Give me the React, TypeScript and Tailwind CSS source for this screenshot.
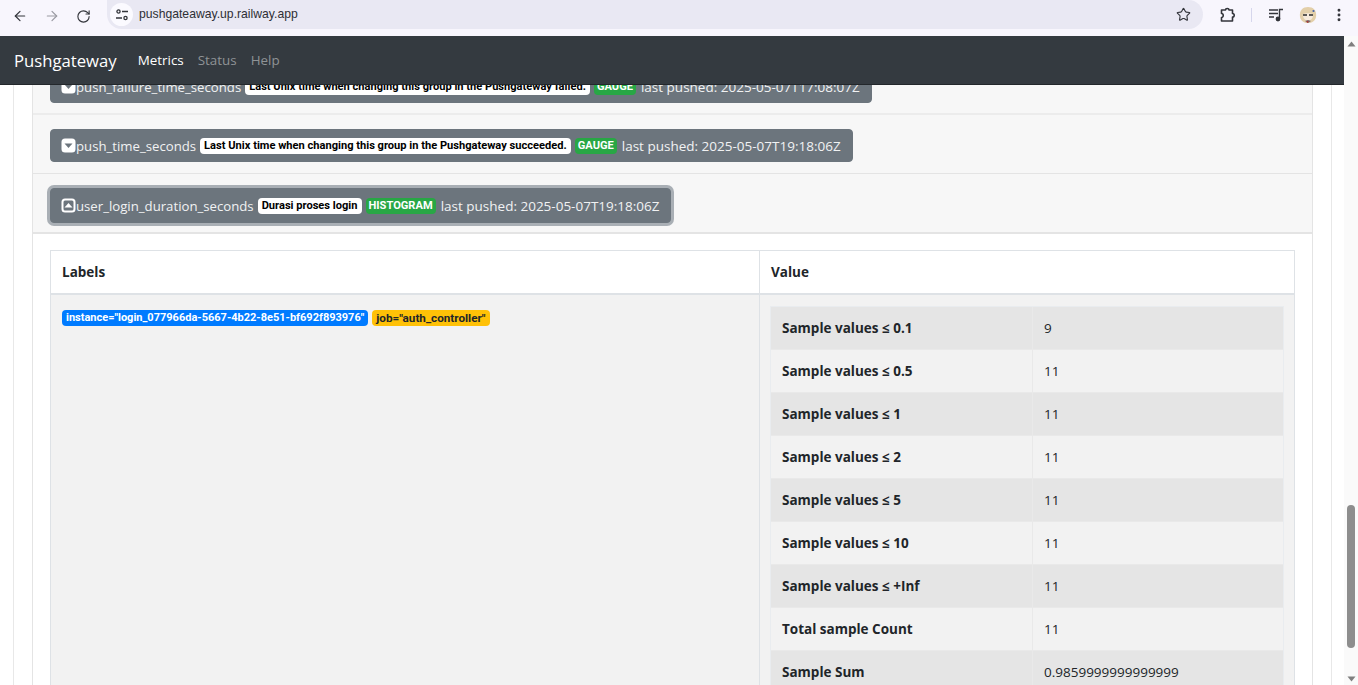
import { ArrowLeft, ArrowRight, RotateCw, Star, EllipsisVertical } from 'lucide-react';

const sampleRows = [
  ['Sample values ≤ 0.1', '9'],
  ['Sample values ≤ 0.5', '11'],
  ['Sample values ≤ 1', '11'],
  ['Sample values ≤ 2', '11'],
  ['Sample values ≤ 5', '11'],
  ['Sample values ≤ 10', '11'],
  ['Sample values ≤ +Inf', '11'],
  ['Total sample Count', '11'],
  ['Sample Sum', '0.9859999999999999'],
];

const CaretBox = ({ up }: { up?: boolean }) => (
  <svg width="15" height="15" viewBox="0 0 15 15" className="shrink-0">
    <rect x="0.5" y="0.5" width="14" height="14" rx="3.5" fill="#ffffff" />
    <rect x="2.5" y="2.5" width="10" height="10" rx="1.5" fill={up ? '#6c757d' : '#ffffff'} />
    <path d={up ? 'M3.5 9.5 L7.5 5 L11.5 9.5 Z' : 'M3.5 5.5 L11.5 5.5 L7.5 10 Z'} fill={up ? '#ffffff' : '#6c757d'} />
  </svg>
);

const MetricButton = ({ name, help, type, pushed, open }: { name: string; help: string; type: string; pushed: string; open?: boolean }) => (
  <div className={`inline-flex items-center rounded-[4px] border border-[#6c757d] bg-[#6c757d] pr-[11px] pl-[10px] text-[#f1f2f3] ${open ? 'h-[35px] shadow-[0_0_0_3px_#a9afb5]' : 'h-[33px]'}`}>
    <CaretBox up={open} />
    <span className="pt-[2px] text-[13.2px]">{name}</span>
    <span className="ml-[4px] rounded-[4px] bg-white px-[4px] py-[2px] font-['Roboto',sans-serif] text-[11.1px] font-bold leading-[12px] text-black">{help}</span>
    <span className="ml-[4px] rounded-[4px] bg-[#28a745] px-[3px] py-[2px] font-['Roboto',sans-serif] text-[11.1px] font-bold leading-[12px] text-white">{type}</span>
    <span className="ml-[5px] pt-[2px] text-[13.5px]">last pushed: {pushed}</span>
  </div>
);

const App = () => {
  return (
    <div className="flex h-[685px] w-[1358px] flex-col overflow-hidden bg-white font-['Open_Sans','Liberation_Sans',sans-serif] text-[#212529]">
      <div className="flex h-[36px] shrink-0 items-start bg-[#f8f6fd]">
        <div className="flex w-[107px] items-center pt-[8px] pl-[12px] text-[#33353b]">
          <ArrowLeft size={16} strokeWidth={1.8} />
          <ArrowRight size={16} strokeWidth={1.8} className="ml-[16px] text-[#9a9aa2]" />
          <RotateCw size={15} strokeWidth={1.8} className="ml-[16px]" />
        </div>
        <div className="flex h-[29px] w-[1096px] items-center justify-between rounded-r-[15px] rounded-bl-[15px] bg-[#e9e8f3] pr-[12px] pl-[3px]">
          <div className="flex items-center">
            <span className="flex h-[23px] w-[23px] items-center justify-center rounded-full bg-[#fbfaff]">
              <svg width="14" height="14" viewBox="0 0 14 14" fill="none" stroke="#33353b" strokeWidth="1.3">
                <circle cx="3.5" cy="3.5" r="1.6" />
                <path d="M7 3.5H13M1 10H7" />
                <circle cx="10.5" cy="10" r="1.6" />
              </svg>
            </span>
            <span className="ml-[6px] font-['Liberation_Sans',sans-serif] text-[12.2px] text-[#2e2f35]">pushgateaway.up.railway.app</span>
          </div>
          <Star size={15} strokeWidth={1.8} className="text-[#33353b]" />
        </div>
        <div className="flex flex-1 items-center pt-[6px] pl-[17px] text-[#33353b]">
          <svg width="16" height="16" viewBox="0 0 16 16" fill="none" stroke="#33353b" strokeWidth="1.6" strokeLinejoin="round">
            <path d="M1.5 3H5.5C5.5 1 9 1 9 3H12.5V6.5C14.8 6.5 14.8 10 12.5 10V14H1.5V10.5C3.8 10.5 3.8 6.5 1.5 6.5Z" />
          </svg>
          <span className="ml-[15px] h-[14px] w-px bg-[#d6d6ec]" />
          <svg width="16" height="16" viewBox="0 0 16 16" className="ml-[16px]" fill="none" stroke="#33353b" strokeWidth="1.4">
            <path d="M1 3H10M1 6.5H10M1 10H6" />
            <path d="M11.5 12V2.5H15" />
            <circle cx="10" cy="12" r="1.7" fill="#33353b" />
          </svg>
          <svg width="18" height="18" viewBox="0 0 18 18" className="ml-[15px]">
            <path d="M1 11C0 4 4 1 9 1C14 1 18 4 17 11C16 15 13 17 9 17C5 17 2 15 1 11Z" fill="#e3cfa9" />
            <path d="M4 8C6 7 12 7 14 8C14.5 12 12 14.5 9 14.5C6 14.5 3.5 12 4 8Z" fill="#f6eadc" />
            <path d="M4 9H8M10 9H14" stroke="#2a2a2a" strokeWidth="1.4" />
            <path d="M6 15L9 14L12 15L9 17Z" fill="#7a6a70" />
            <circle cx="8.5" cy="15.8" r="0.9" fill="#b5332e" />
            <circle cx="14.5" cy="5" r="1.1" fill="#4565a8" />
          </svg>
          <EllipsisVertical size={16} strokeWidth={2.4} className="ml-[14px]" />
        </div>
      </div>

      <div className="flex min-h-0 flex-1">
        <div className="relative min-w-0 flex-1 overflow-hidden">
          <nav className="absolute inset-x-0 top-0 z-10 flex h-[49px] items-center border-b border-[#23272b] bg-[#343a40] pl-[14px]">
            <span className="pt-[2px] text-[16.7px] text-white">Pushgateway</span>
            <span className="ml-[21px] text-[13.4px] text-white">Metrics</span>
            <span className="ml-[14px] text-[13.4px] text-[#8f9396]">Status</span>
            <span className="ml-[14px] text-[13.4px] text-[#8f9396]">Help</span>
          </nav>

          <div className="ml-[13px] w-[1319px] border-x border-[#e8e8e8] pr-[18px] pl-[18px]">
            <div className="border-x border-[#e4e4e4]">
              <div className="flex h-[79px] items-end border-b-2 border-[#ececec] bg-[#f7f7f7] pb-[10px] pl-[17px]">
                <MetricButton name="push_failure_time_seconds" help="Last Unix time when changing this group in the Pushgateway failed." type="GAUGE" pushed="2025-05-07T17:08:07Z" />
              </div>
              <div className="flex h-[59px] items-center border-b border-[#e4e4e4] bg-[#f7f7f7] pt-[3px] pl-[17px]">
                <MetricButton name="push_time_seconds" help="Last Unix time when changing this group in the Pushgateway succeeded." type="GAUGE" pushed="2025-05-07T19:18:06Z" />
              </div>
              <div className="flex h-[60px] items-center border-b-2 border-[#e4e4e4] bg-[#f7f7f7] pt-[5px] pl-[17px]">
                <MetricButton open name="user_login_duration_seconds" help="Durasi proses login" type="HISTOGRAM" pushed="2025-05-07T19:18:06Z" />
              </div>

              <div className="px-[17px] pt-[16px]">
                <div className="border border-[#dee2e6]">
                  <div className="flex h-[44px] border-b-2 border-[#dee2e6] text-[13.5px] font-bold">
                    <div className="flex w-[709px] items-center border-r border-[#dee2e6] pt-[1px] pl-[11px]">Labels</div>
                    <div className="flex flex-1 items-center pt-[1px] pl-[11px]">Value</div>
                  </div>
                  <div className="flex bg-[#f2f2f2]">
                    <div className="flex w-[709px] items-start gap-[4px] border-r border-[#dee2e6] pt-[15px] pl-[11px] font-['Roboto',sans-serif] text-[11px] font-bold leading-[12px]">
                      <span className="rounded-[4px] bg-[#007bff] px-[4px] py-[2px] text-white">instance="login_077966da-5667-4b22-8e51-bf692f893976"</span>
                      <span className="rounded-[4px] bg-[#ffc107] px-[4px] py-[2px] text-[11.7px] text-[#212529]">job="auth_controller"</span>
                    </div>
                    <div className="flex-1 pt-[11px] pr-[10px] pl-[10px]">
                      <div className="border border-[#e9ecef] text-[13.5px]">
                        {sampleRows.map(([label, value], index) => (
                          <div key={label} className={`flex h-[43px] border-b border-[#e9e9e9] ${index % 2 === 0 ? 'bg-[#e5e5e5]' : 'bg-[#f2f2f2]'}`}>
                            <div className="flex w-[262px] items-center border-r border-[#e9e9e9] pl-[11px] font-bold">{label}</div>
                            <div className="flex flex-1 items-center pl-[11px]">{value}</div>
                          </div>
                        ))}
                      </div>
                    </div>
                  </div>
                </div>
              </div>
            </div>
          </div>
        </div>

        <div className="flex w-[14px] shrink-0 flex-col items-center bg-[#fafafa]">
          <svg width="9" height="6" viewBox="0 0 9 6" className="mt-[5px]"><path d="M0.5 5.5L4.5 0.5L8.5 5.5Z" fill="#7f7f7f" /></svg>
          <div className="mt-[458px] h-[143px] w-[8px] rounded-full bg-[#8d8d8d]" />
          <svg width="9" height="6" viewBox="0 0 9 6" className="mt-[28px]"><path d="M0.5 0.5L8.5 0.5L4.5 5.5Z" fill="#7f7f7f" /></svg>
        </div>
      </div>
    </div>
  );
};

export default App;
